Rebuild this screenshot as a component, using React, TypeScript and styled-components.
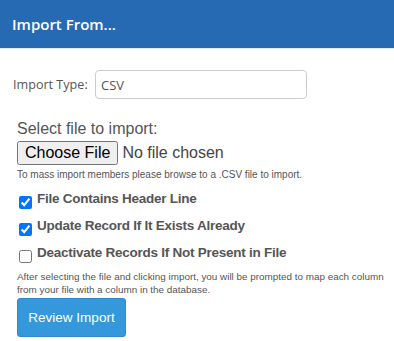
import React from "react";
import styled, { createGlobalStyle } from "styled-components";

const GlobalStyle = createGlobalStyle`
  html, body {
    margin: 0;
    padding: 0;
    background: #fff;
  }
  body {
    font-family: "Liberation Sans", Arial, sans-serif;
    color: #555;
  }
`;

const Panel = styled.div`
  width: 394px;
  min-height: 341px;
  background: #fff;
`;

const Header = styled.div`
  display: flex;
  align-items: center;
  height: 49px;
  padding: 0 12px 1px;
  background: #266ab3;
  border-bottom: 1px solid #e5ecf5;
  box-sizing: border-box;
`;

const Title = styled.h3`
  margin: 0;
  font-family: "Open Sans", sans-serif;
  font-size: 15px;
  font-weight: 600;
  color: #fff;
`;

const Body = styled.div`
  padding: 21px 0 0 0;
`;

const TypeRow = styled.div`
  display: flex;
  align-items: center;
  gap: 8px;
  padding-left: 13px;
`;

const TypeLabel = styled.label`
  width: 74px;
  white-space: nowrap;
  font-family: "Open Sans", sans-serif;
  font-size: 12.6px;
  font-weight: 400;
  color: #555;
`;

const TypeInput = styled.input`
  width: 212px;
  height: 29px;
  box-sizing: border-box;
  padding: 0 5px;
  border: 1px solid #ccc;
  border-radius: 4px;
  font-family: "Open Sans", sans-serif;
  font-size: 13px;
  color: #555;
  outline: none;
`;

const FileSection = styled.div`
  display: flex;
  flex-direction: column;
  padding: 20px 2px 0 17px;
`;

const SelectLabel = styled.div`
  font-size: 16px;
  line-height: 20px;
  color: #555;
`;

const FileInput = styled.input`
  margin: 2px 0 0 0;
  font-family: "Liberation Sans", Arial, sans-serif;
  font-size: 16px;
  color: #444;
`;

const Hint = styled.div`
  margin-top: 4px;
  font-size: 10px;
  line-height: 12px;
  color: #555;
`;

const Options = styled.div`
  display: flex;
  flex-direction: column;
  gap: 8px;
  margin-top: 9px;
`;

const OptionRow = styled.label`
  display: flex;
  align-items: flex-start;
  gap: 2px;
  font-size: 13.5px;
  font-weight: 700;
  letter-spacing: -0.25px;
  line-height: 17px;
  color: #555;
`;

const Check = styled.input`
  width: 13px;
  height: 13px;
  margin: 6px 3px 0 2px;
  accent-color: #0075ff;
`;

const Note = styled.p`
  margin: 8px 0 0 0;
  font-size: 9.9px;
  line-height: 12.5px;
  color: #555;
`;

const ReviewButton = styled.button`
  align-self: flex-start;
  margin-top: 2px;
  width: 109px;
  height: 39px;
  padding: 0;
  border: 1px solid #2f8bcf;
  border-radius: 3px;
  background: #3498db;
  color: #fff;
  font-family: "Liberation Sans", Arial, sans-serif;
  font-size: 13.5px;
  cursor: pointer;
`;

const options = [
  { label: "File Contains Header Line", checked: true },
  { label: "Update Record If It Exists Already", checked: true },
  { label: "Deactivate Records If Not Present in File", checked: false },
];

export default function App() {
  return (
    <>
      <GlobalStyle />
      <Panel>
        <Header>
          <Title>Import From...</Title>
        </Header>
        <Body>
          <TypeRow>
            <TypeLabel>Import Type:</TypeLabel>
            <TypeInput defaultValue="CSV" readOnly />
          </TypeRow>
          <FileSection>
            <SelectLabel>Select file to import:</SelectLabel>
            <FileInput type="file" accept=".csv" />
            <Hint>To mass import members please browse to a .CSV file to import.</Hint>
            <Options>
              {options.map((o) => (
                <OptionRow key={o.label}>
                  <Check type="checkbox" defaultChecked={o.checked} />
                  {o.label}
                </OptionRow>
              ))}
            </Options>
            <Note>
              After selecting the file and clicking import, you will be prompted to map each column
              from your file with a column in the database.
            </Note>
            <ReviewButton>Review Import</ReviewButton>
          </FileSection>
        </Body>
      </Panel>
    </>
  );
}
